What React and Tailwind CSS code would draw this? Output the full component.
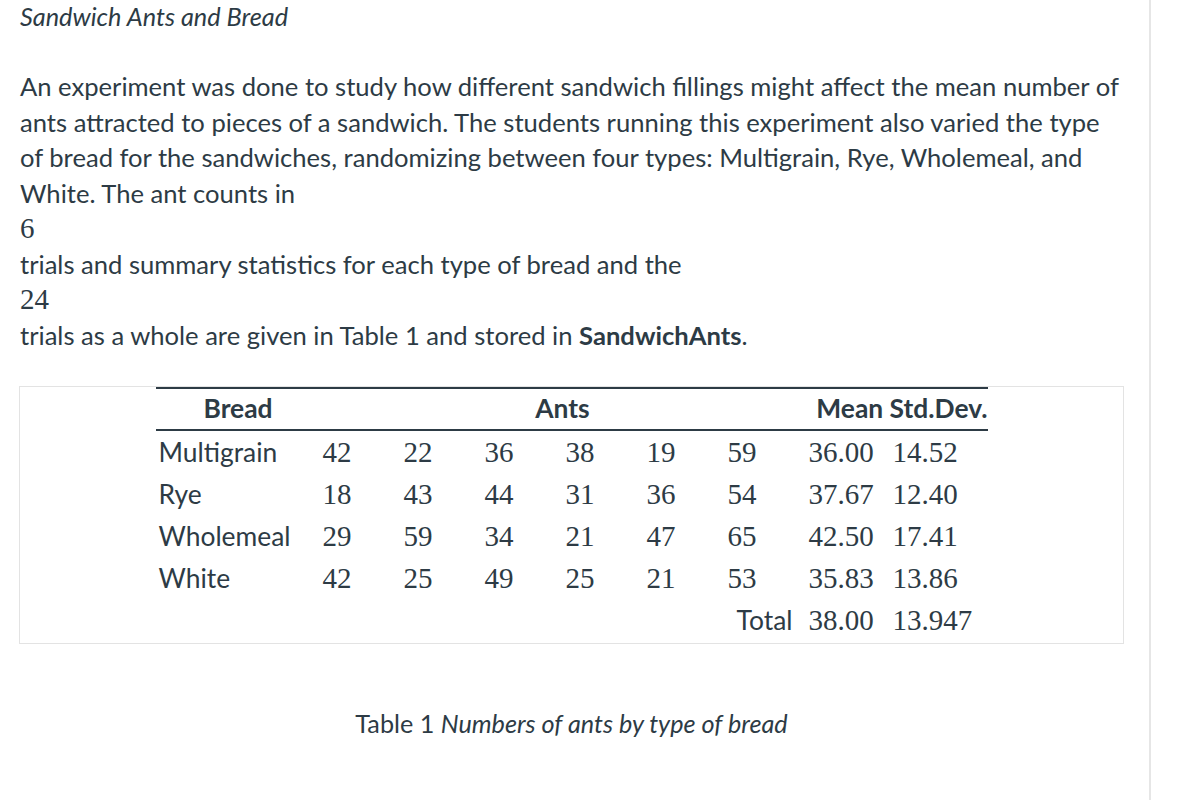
import React from "react";

const rows = [
  ["Multigrain", [42, 22, 36, 38, 19, 59], "36.00", "14.52"],
  ["Rye", [18, 43, 44, 31, 36, 54], "37.67", "12.40"],
  ["Wholemeal", [29, 59, 34, 21, 47, 65], "42.50", "17.41"],
  ["White", [42, 25, 49, 25, 21, 53], "35.83", "13.86"],
];

const serif = "font-['Liberation_Serif','Times_New_Roman',serif] text-[29px]";

const App = () => {
  return (
    <div className="flex min-h-[800px] bg-white text-[#2d3b45] font-['Lato','Noto_Sans',sans-serif]">
      <main className="w-[1149px] pl-[19px] pr-[25px]">
        <h2 className="pl-px text-[25.3px] leading-[33px] italic">Sandwich Ants and Bread</h2>

        <p className="mt-[36px] pl-px text-[25.6px] leading-[35.5px]">
          An experiment was done to study how different sandwich fillings might affect the mean number of
          ants attracted to pieces of a sandwich. The students running this experiment also varied the type
          of bread for the sandwiches, randomizing between four types: Multigrain, Rye, Wholemeal, and
          White. The ant counts in
          <span className={`block ${serif} leading-[35.5px]`}>6</span>
          trials and summary statistics for each type of bread and the
          <span className={`block ${serif} leading-[35.5px]`}>24</span>
          trials as a whole are given in Table 1 and stored in <b className="font-bold">SandwichAnts</b>.
        </p>

        <div className="mt-[33px] flex justify-center border border-[#e3e3e3] pb-[2px]">
          <div className="grid w-[832px] grid-cols-[141px_repeat(6,81px)_104px_101px] border-t-2 border-[#2d3b45] text-[26.4px]">
            {/* header */}
            <div className="col-span-9 grid grid-cols-subgrid h-[42px] items-center border-b-2 border-[#2d3b45] font-bold">
              <div className="pl-[48px]">Bread</div>
              <div className="col-span-6 pl-[46px] text-center">Ants</div>
              <div className="col-span-2 text-right">Mean Std.Dev.</div>
            </div>

            {rows.map(([name, counts, mean, sd]) => (
              <div key={name} className="col-span-9 grid grid-cols-subgrid h-[42px] items-center">
                <div className="pl-[3px]">{name}</div>
                {counts.map((n, i) => (
                  <div key={i} className={`${serif} text-center`}>
                    {n}
                  </div>
                ))}
                <div className={`${serif} pl-[26px]`}>{mean}</div>
                <div className={`${serif} pl-[6px]`}>{sd}</div>
              </div>
            ))}

            <div className="col-span-9 grid grid-cols-subgrid h-[42px] items-center">
              <div className="col-span-7 -mr-[10px] text-right">Total</div>
              <div className={`${serif} pl-[26px]`}>38.00</div>
              <div className={`${serif} pl-[6px]`}>13.947</div>
            </div>
          </div>
        </div>

        <p className="mt-[62px] text-center text-[25.2px] leading-[35px]">
          Table 1 <i>Numbers of ants by type of bread</i>
        </p>
      </main>
      <aside className="flex-1 border-l-2 border-[#e6e6e6]" />
    </div>
  );
};

export default App;
